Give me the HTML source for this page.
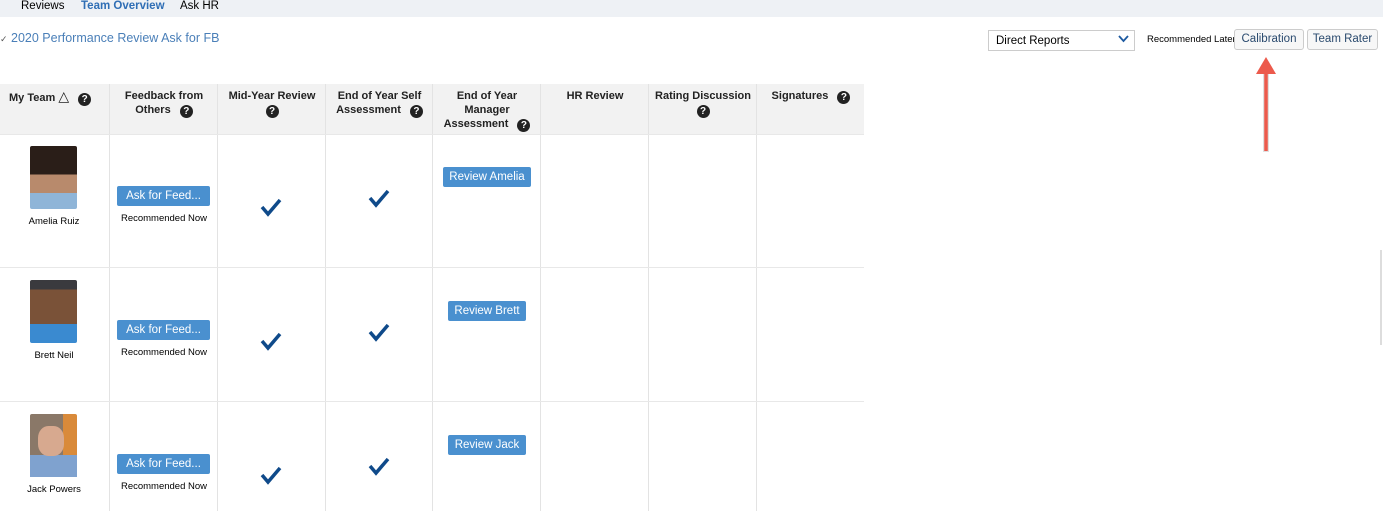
<!DOCTYPE html>
<html><head><meta charset="utf-8"><style>
*{margin:0;padding:0;box-sizing:border-box}
body{width:1383px;height:511px;overflow:hidden;background:#fff;font-family:"Liberation Sans",Arial,sans-serif;position:relative;color:#000}
.a{position:absolute}
.nav{left:0;top:0;width:1383px;height:17px;background:#eef1f5}
.nav span{position:absolute;top:0;font-size:11.5px}
.hdr{left:0;top:84px;width:864px;height:50px;background:#f2f2f2}
.vl{position:absolute;width:1px;background:#e3e3e3;top:84px;height:427px}
.hl{position:absolute;height:1px;background:#e8e8e8;left:0;width:864px}
.h{position:absolute;top:89px;font-size:11px;font-weight:bold;text-align:center;line-height:14px;color:#222}
.q{display:inline-block;width:13px;height:13px;border-radius:50%;background:#222;color:#fff;font-size:10px;line-height:13px;text-align:center;font-weight:bold;vertical-align:-1px;margin-left:6px}
.btn{position:absolute;height:20px;background:#4a90cf;color:#fff;font-size:11.5px;line-height:20px;text-align:center;border-radius:2px}
.sm{position:absolute;font-size:9.5px;text-align:center}
.chk{position:absolute;width:22px;height:20px}
.ph{position:absolute;width:47px;height:63px;border-radius:2px}
.gb{position:absolute;top:29px;height:21px;border:1px solid #ccc;border-radius:3px;background:#f7f7f7;color:#2a4a6e;font-size:11.5px;line-height:19px;text-align:center}
</style></head><body>
<div class="a nav"><span style="left:21px">Reviews</span><span style="left:81px;color:#2f6eb5;font-weight:bold">Team Overview</span><span style="left:180px">Ask HR</span></div>
<div class="a" style="left:0;top:31px;font-size:12.5px;color:#4a7fb8"><span style="font-size:9px;color:#555">✓</span> 2020 Performance Review Ask for FB</div>
<div class="a" style="left:988px;top:30px;width:147px;height:21px;border:1px solid #ccc;font-size:11.5px;line-height:20px;padding-left:7px">Direct Reports<svg style="position:absolute;right:5px;top:4px" width="11" height="8"><path d="M1 1 L5.5 6 L10 1" fill="none" stroke="#1d5aa0" stroke-width="1.8"/></svg></div>
<div class="a" style="left:1147px;top:34px;font-size:9.5px">Recommended Later</div>
<div class="gb" style="left:1234px;width:70px">Calibration</div>
<div class="gb" style="left:1307px;width:71px">Team Rater</div>
<svg class="a" style="left:1253px;top:55px" width="26" height="100"><line x1="13" y1="14" x2="13" y2="97" stroke="#c0c0c0" stroke-width="6" opacity=".5"/><line x1="13" y1="14" x2="13" y2="96" stroke="#ec5a4c" stroke-width="3.5"/><polygon points="13,2 3,19 23,19" fill="#ec5a4c"/></svg>
<div class="a" style="left:1380px;top:250px;width:2px;height:95px;background:#ddd"></div>
<div class="a hdr"></div>
<div class="vl" style="left:109px"></div><div class="vl" style="left:217px"></div><div class="vl" style="left:325px"></div><div class="vl" style="left:432px"></div><div class="vl" style="left:540px"></div><div class="vl" style="left:648px"></div><div class="vl" style="left:756px"></div>
<div class="hl" style="top:134px"></div><div class="hl" style="top:267px"></div><div class="hl" style="top:401px"></div>
<div class="h" style="left:9px;top:89px">My Team <span style="font-weight:normal;font-size:14px">△</span> <span class="q" style="margin-left:6px">?</span></div>
<div class="h" style="left:110px;width:108px">Feedback from<br>Others <span class="q">?</span></div>
<div class="h" style="left:218px;width:108px">Mid-Year Review<br><span class="q" style="margin:0">?</span></div>
<div class="h" style="left:326px;width:107px">End of Year Self<br>Assessment <span class="q">?</span></div>
<div class="h" style="left:433px;width:108px">End of Year<br>Manager<br>Assessment <span class="q">?</span></div>
<div class="h" style="left:541px;width:108px">HR Review</div>
<div class="h" style="left:649px;width:108px">Rating Discussion<br><span class="q" style="margin:0">?</span></div>
<div class="h" style="left:757px;width:108px;top:89px">Signatures <span class="q">?</span></div>

<div class="ph" style="left:30px;top:146px;background:linear-gradient(#2a1e18 0 45%,#b88a6c 45% 75%,#8fb5d8 75%)"></div>
<div class="sm" style="left:0;width:108px;top:216px">Amelia Ruiz</div>
<div class="btn" style="left:117px;top:186px;width:93px">Ask for Feed...</div>
<div class="sm" style="left:110px;width:108px;top:213px">Recommended Now</div>
<svg class="chk" style="left:260px;top:197px" viewBox="0 0 22 20"><path d="M2 10 L8 17 L20 3" fill="none" stroke="#0f4a8a" stroke-width="3.5"/></svg>
<svg class="chk" style="left:368px;top:188px" viewBox="0 0 22 20"><path d="M2 10 L8 17 L20 3" fill="none" stroke="#0f4a8a" stroke-width="3.5"/></svg>
<div class="btn" style="left:443px;top:167px;width:88px">Review Amelia</div>

<div class="ph" style="left:30px;top:280px;background:linear-gradient(#3a3a3e 0 15%,#7a5238 15% 70%,#3a8ad0 70%)"></div>
<div class="sm" style="left:0;width:108px;top:350px">Brett Neil</div>
<div class="btn" style="left:117px;top:320px;width:93px">Ask for Feed...</div>
<div class="sm" style="left:110px;width:108px;top:347px">Recommended Now</div>
<svg class="chk" style="left:260px;top:331px" viewBox="0 0 22 20"><path d="M2 10 L8 17 L20 3" fill="none" stroke="#0f4a8a" stroke-width="3.5"/></svg>
<svg class="chk" style="left:368px;top:322px" viewBox="0 0 22 20"><path d="M2 10 L8 17 L20 3" fill="none" stroke="#0f4a8a" stroke-width="3.5"/></svg>
<div class="btn" style="left:448px;top:301px;width:78px">Review Brett</div>

<div class="ph" style="left:30px;top:414px;background:linear-gradient(90deg,#8a7868 0 70%,#d98a3a 70%);"><div style="position:absolute;left:0;bottom:0;width:47px;height:22px;background:#7fa2cf"></div><div style="position:absolute;left:8px;top:12px;width:26px;height:30px;background:#d7a98f;border-radius:40%"></div></div>
<div class="sm" style="left:0;width:108px;top:484px">Jack Powers</div>
<div class="btn" style="left:117px;top:454px;width:93px">Ask for Feed...</div>
<div class="sm" style="left:110px;width:108px;top:481px">Recommended Now</div>
<svg class="chk" style="left:260px;top:465px" viewBox="0 0 22 20"><path d="M2 10 L8 17 L20 3" fill="none" stroke="#0f4a8a" stroke-width="3.5"/></svg>
<svg class="chk" style="left:368px;top:456px" viewBox="0 0 22 20"><path d="M2 10 L8 17 L20 3" fill="none" stroke="#0f4a8a" stroke-width="3.5"/></svg>
<div class="btn" style="left:448px;top:435px;width:78px">Review Jack</div>
</body></html>
